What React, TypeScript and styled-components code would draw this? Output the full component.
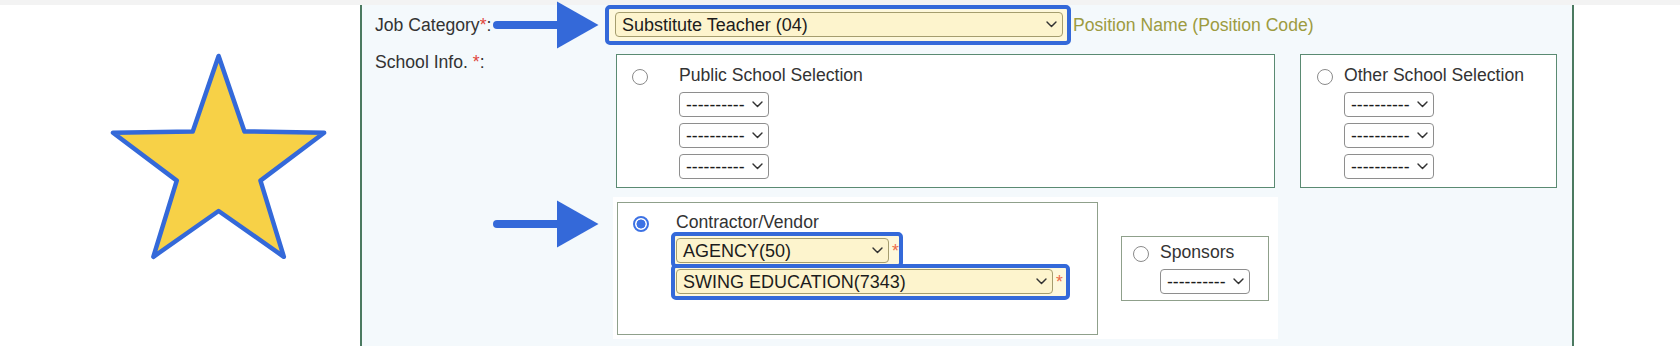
import React from "react";
import styled, { createGlobalStyle } from "styled-components";

const GlobalStyle = createGlobalStyle`
  html, body {
    margin: 0;
    padding: 0;
    background: #fff;
  }
  body {
    font-family: "Liberation Sans", Arial, sans-serif;
    font-size: 17.6px;
    line-height: 20px;
    color: #333;
  }
  * {
    box-sizing: border-box;
  }
`;

const ANNOTATION_BLUE = "#3469d9";

const TopStrip = styled.div`
  height: 5px;
  background: #f3f3f3;
`;

const Main = styled.div`
  display: flex;
  min-height: 341px;
`;

const StarColumn = styled.div`
  flex: none;
  width: 360px;
  padding: 47px 0 0 108px;
`;

const Panel = styled.div`
  position: relative;
  flex: none;
  width: 1214px;
  border-left: 2px solid #4b7a60;
  border-right: 2px solid #4b7a60;
  background: #f4f9fc;
  padding: 4px 0 0 13px;
  display: grid;
  grid-template-columns: 234px auto;
  grid-auto-rows: min-content;
  align-content: start;
  row-gap: 10px;
`;

const Label = styled.div<{ $top?: boolean }>`
  align-self: ${(p) => (p.$top ? "start" : "center")};
  padding-top: ${(p) => (p.$top ? "1px" : "0")};
  white-space: nowrap;
`;

const Req = styled.span`
  color: #e0473d;
`;

const JobRow = styled.div`
  display: flex;
  align-items: center;
`;

const Frame = styled.div<{ $pad: string }>`
  display: inline-flex;
  align-items: center;
  padding: ${(p) => p.$pad};
  background: #fef8dc;
  outline: 4px solid ${ANNOTATION_BLUE};
  border-radius: 1px;
`;

const Hint = styled.span`
  margin-left: 6px;
  color: #9d9b40;
  white-space: nowrap;
`;

const SelectBox = styled.div<{ $w: number; $req?: boolean }>`
  display: flex;
  align-items: center;
  justify-content: space-between;
  flex: none;
  width: ${(p) => p.$w}px;
  height: 25px;
  padding: 0 5px 0 6px;
  border: 1px solid ${(p) => (p.$req ? "#a59d6e" : "#8e8e8e")};
  border-radius: 4px;
  background: ${(p) => (p.$req ? "#fdf4cd" : "#fff")};
  color: #1c1c1c;
  font-size: ${(p) => (p.$req ? "18px" : "17.6px")};
  white-space: nowrap;
`;

const ChevronSvg = styled.svg`
  flex: none;
  display: block;
`;

const Nested = styled.div`
  margin-left: 4px;
  display: grid;
  grid-template-columns: 665px 263px;
  column-gap: 19px;
  row-gap: 6px;
`;

const Cell = styled.div`
  padding: 3px;
  display: flex;
`;

const WhiteCell = styled.div`
  display: flex;
  align-items: center;
  min-height: 142px;
  background: #fff;
  padding: 5px 9px 4px 4px;
`;

const ChoiceBox = styled.div<{ $pad: string; $gap: number; $soft?: boolean; $w?: number; $stretch?: boolean }>`
  display: flex;
  align-items: flex-start;
  column-gap: ${(p) => p.$gap}px;
  width: ${(p) => (p.$w ? `${p.$w}px` : "auto")};
  flex: ${(p) => (p.$w ? "none" : "1")};
  align-self: ${(p) => (p.$stretch ? "stretch" : "center")};
  padding: ${(p) => p.$pad};
  background: #fff;
  border: 1px solid ${(p) => (p.$soft ? "#8fa08b" : "#5a8a72")};
`;

const SponsorSpacer = styled.div`
  width: 23px;
  flex: none;
`;

const Radio = styled.span<{ $on?: boolean }>`
  flex: none;
  width: 16px;
  height: 16px;
  margin-top: 4px;
  border-radius: 50%;
  border: ${(p) => (p.$on ? `2px solid #3d72e4` : "1px solid #8a8a8a")};
  background: ${(p) =>
    p.$on ? "radial-gradient(circle, #3d72e4 0 4.2px, #fff 4.8px)" : "#fff"};
`;

const ChoiceBody = styled.div`
  display: flex;
  flex-direction: column;
  align-items: flex-start;
`;

const ChoiceTitle = styled.div<{ $indent?: number }>`
  padding-left: ${(p) => p.$indent ?? 0}px;
  white-space: nowrap;
  color: #333;
`;

const SelectStack = styled.div`
  display: flex;
  flex-direction: column;
  gap: 6px;
  margin-top: 7px;
`;

const FrameStack = styled.div`
  display: flex;
  flex-direction: column;
  align-items: flex-start;
  gap: 4px;
  margin-top: 4px;
`;

const FrameStar = styled.span`
  margin-left: 3px;
  color: #eb6b4b;
`;

const ArrowSvg = styled.svg<{ $top: number }>`
  position: absolute;
  left: 131px;
  top: ${(p) => p.$top}px;
  overflow: visible;
`;

function Chevron() {
  return (
    <ChevronSvg width="11" height="7" viewBox="0 0 11 7">
      <polyline
        points="1,1 5.5,5.6 10,1"
        fill="none"
        stroke="#333"
        strokeWidth="1.4"
        strokeLinecap="round"
        strokeLinejoin="round"
      />
    </ChevronSvg>
  );
}

function Select({ value, width, req }: { value: string; width: number; req?: boolean }) {
  return (
    <SelectBox $w={width} $req={req}>
      <span>{value}</span>
      <Chevron />
    </SelectBox>
  );
}

function Arrow({ top }: { top: number }) {
  return (
    <ArrowSvg $top={top} width="106" height="48" viewBox="0 0 106 48">
      <line x1="4" y1="24" x2="66" y2="24" stroke={ANNOTATION_BLUE} strokeWidth="8" strokeLinecap="round" />
      <polygon points="64,0.5 105.5,24 64,47.5" fill={ANNOTATION_BLUE} />
    </ArrowSvg>
  );
}

function Star() {
  return (
    <svg width="222" height="210" viewBox="0 0 222 210" style={{ display: "block" }}>
      <polygon
        points="110.6,4 136.46,79.4 216.17,80.7 152.45,128.6 175.85,204.8 110.6,159 45.35,204.8 68.75,128.6 5.03,80.7 84.74,79.4"
        fill="#f7d147"
        stroke={ANNOTATION_BLUE}
        strokeWidth="4.5"
        strokeLinejoin="round"
      />
    </svg>
  );
}

const DASHES = "----------";

export default function App() {
  return (
    <>
      <GlobalStyle />
      <TopStrip />
      <Main>
        <StarColumn>
          <Star />
        </StarColumn>
        <Panel>
          <Label>
            Job Category<Req>*</Req>:
          </Label>
          <JobRow>
            <Frame $pad="3px 4px 4px 6px">
              <Select value="Substitute Teacher (04)" width={448} req />
            </Frame>
            <Hint>Position Name (Position Code)</Hint>
          </JobRow>

          <Label $top>
            School Info. <Req>*</Req>:
          </Label>
          <Nested>
            <Cell>
              <ChoiceBox $pad="10px 0 8px 15px" $gap={31}>
                <Radio />
                <ChoiceBody>
                  <ChoiceTitle>Public School Selection</ChoiceTitle>
                  <SelectStack>
                    <Select value={DASHES} width={90} />
                    <Select value={DASHES} width={90} />
                    <Select value={DASHES} width={90} />
                  </SelectStack>
                </ChoiceBody>
              </ChoiceBox>
            </Cell>
            <Cell>
              <ChoiceBox $pad="10px 0 8px 16px" $gap={11}>
                <Radio />
                <ChoiceBody>
                  <ChoiceTitle>Other School Selection</ChoiceTitle>
                  <SelectStack>
                    <Select value={DASHES} width={90} />
                    <Select value={DASHES} width={90} />
                    <Select value={DASHES} width={90} />
                  </SelectStack>
                </ChoiceBody>
              </ChoiceBox>
            </Cell>

            <WhiteCell>
              <ChoiceBox $pad="9px 0 0 15px" $gap={26} $soft $w={481} $stretch>
                <Radio $on />
                <ChoiceBody>
                  <ChoiceTitle $indent={1}>Contractor/Vendor</ChoiceTitle>
                  <FrameStack>
                    <Frame $pad="2px 0 1px 1px">
                      <Select value="AGENCY(50)" width={213} req />
                      <FrameStar>*</FrameStar>
                    </Frame>
                    <Frame $pad="1px 3px 2px 1px">
                      <Select value="SWING EDUCATION(7343)" width={377} req />
                      <FrameStar>*</FrameStar>
                    </Frame>
                  </FrameStack>
                </ChoiceBody>
              </ChoiceBox>
              <SponsorSpacer />
              <ChoiceBox $pad="5px 18px 6px 11px" $gap={11} $soft $w={148}>
                <Radio />
                <ChoiceBody>
                  <ChoiceTitle>Sponsors</ChoiceTitle>
                  <SelectStack>
                    <Select value={DASHES} width={90} />
                  </SelectStack>
                </ChoiceBody>
              </ChoiceBox>
            </WhiteCell>
          </Nested>

          <Arrow top={-4} />
          <Arrow top={195} />
        </Panel>
      </Main>
    </>
  );
}
